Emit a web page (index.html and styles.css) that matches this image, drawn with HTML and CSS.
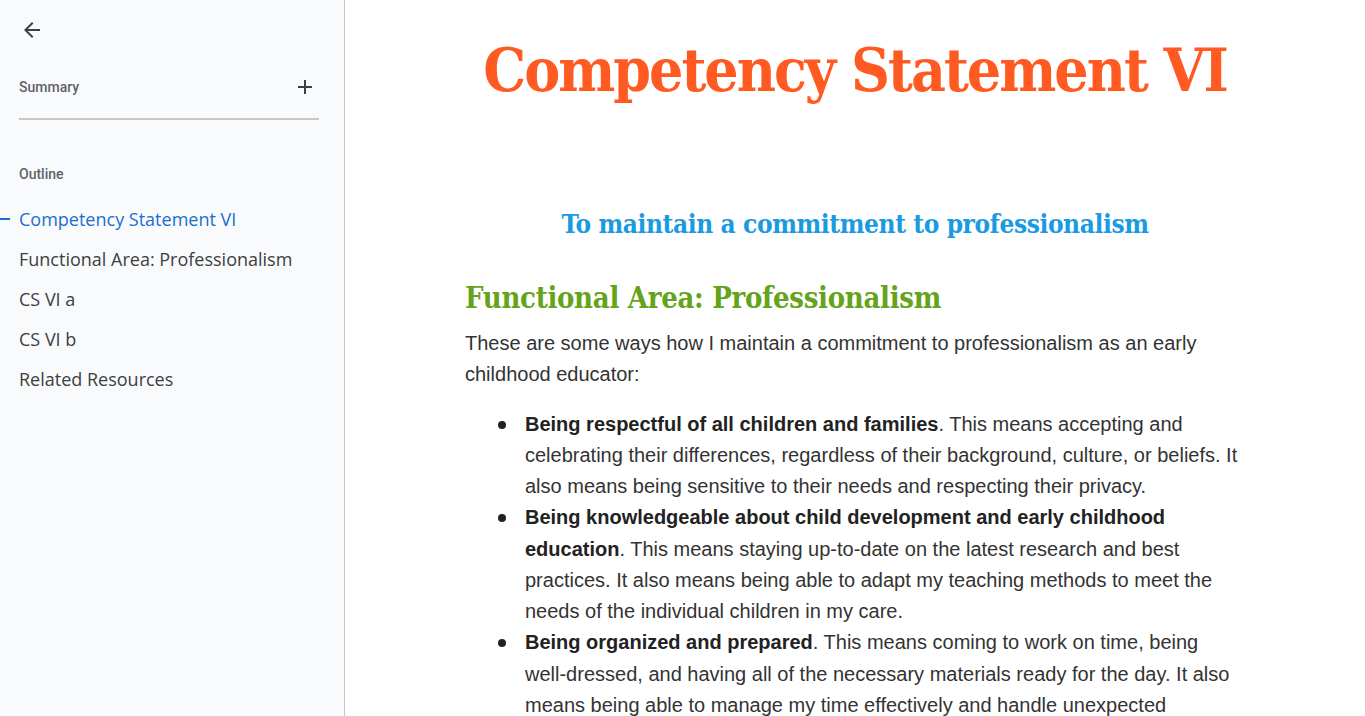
FILE: index.html
```html
<!DOCTYPE html>
<html lang="en">
<head>
<meta charset="utf-8">
<title>Competency Statement VI</title>
<link rel="stylesheet" href="styles.css">
</head>
<body>
<div class="page">
  <aside class="sidebar">
    <button class="back" aria-label="Back">
      <svg width="24" height="24" viewBox="0 0 24 24"><path d="M20 11H7.83l5.59-5.59L12 4l-8 8 8 8 1.41-1.41L7.83 13H20v-2z" fill="#3c4043"/></svg>
    </button>
    <div class="summary">
      <span class="label">Summary</span>
      <svg class="plus" width="24" height="24" viewBox="0 0 24 24"><path d="M19 13h-6v6h-2v-6H5v-2h6V5h2v6h6v2z" fill="#3c4043"/></svg>
    </div>
    <div class="divider"></div>
    <div class="outline-label label">Outline</div>
    <ul class="outline">
      <li class="active">Competency Statement VI</li>
      <li>Functional Area: Professionalism</li>
      <li>CS VI a</li>
      <li>CS VI b</li>
      <li>Related Resources</li>
    </ul>
  </aside>
  <main class="main">
    <h1 class="title">Competency Statement VI</h1>
    <div class="content">
      <h2 class="subtitle">To maintain a commitment to professionalism</h2>
      <h3 class="area">Functional Area: Professionalism</h3>
      <p class="text">These are some ways how I maintain a commitment to professionalism as an early childhood educator:</p>
      <ul class="list text">
        <li><b>Being respectful of all children and families</b>. This means accepting and celebrating their differences, regardless of their background, culture, or beliefs. It also means being sensitive to their needs and respecting their privacy.</li>
        <li><b>Being knowledgeable about child development and early childhood education</b>. This means staying up-to-date on the latest research and best practices. It also means being able to adapt my teaching methods to meet the needs of the individual children in my care.</li>
        <li><b>Being organized and prepared</b>. This means coming to work on time, being <span class="nw">well-dressed,</span> and having all of the necessary materials ready for the day. It also means being able to manage my time effectively and handle unexpected situations calmly and professionally.</li>
      </ul>
    </div>
  </main>
</div>
</body>
</html>
```

FILE: styles.css
```css
* { box-sizing: border-box; }
html, body { margin: 0; padding: 0; height: 100%; overflow: hidden; }
body { background: #fff; font-family: "Liberation Sans", Arial, sans-serif; }

.page { display: flex; height: 716px; overflow: hidden; }

.sidebar {
  width: 345px;
  flex: none;
  background: #f9fafc;
  border-right: 1px solid #c6c6c6;
  padding: 0 25px 0 19px;
  font-family: Roboto, "Open Sans", sans-serif;
}
.back {
  display: block;
  margin: 18px 0 0 1px;
  padding: 0;
  width: 24px; height: 24px;
  background: none; border: 0;
}
.back svg { display: block; }
.label { font-size: 14px; font-weight: 500; color: #5f6368; }
.summary {
  display: flex; align-items: center; justify-content: space-between;
  margin-top: 33px;
  height: 24px;
  padding-right: 2px;
}
.plus { display: block; }
.divider { height: 2px; background: #c7c7c7; margin-top: 19px; }
.outline-label { margin-top: 44px; line-height: 20px; }
.outline { list-style: none; margin: 15px 0 0 0; padding: 0; }
.outline li {
  font-family: "Open Sans", Roboto, sans-serif;
  font-size: 18px; line-height: 40px; height: 40px;
  color: #3c4043; position: relative; white-space: nowrap;
}
.outline li.active { color: #1a6fd0; }
.outline li.active::before {
  content: ""; position: absolute; left: -19px; top: 19px;
  width: 10px; height: 2px; background: #1a6fd0;
}

.main { flex: 1; min-width: 0; display: flex; flex-direction: column; align-items: center; }
.title {
  margin: 30px 0 0 0;
  font-family: "DejaVu Serif Condensed", "DejaVu Serif", serif;
  font-weight: bold;
  font-size: 60px;
  line-height: 80px;
  color: #ff5a22;
  text-align: center;
  letter-spacing: -2px;
}
.content { width: 780px; }
.subtitle {
  margin: 97px 0 0 0;
  font-family: "DejaVu Serif Condensed", "DejaVu Serif", serif;
  font-weight: bold;
  font-size: 26px; line-height: 34px;
  color: #1a9ae0;
  text-align: center;
  letter-spacing: -0.4px;
}
.area {
  margin: 39px 0 0 0;
  font-family: "DejaVu Serif Condensed", "DejaVu Serif", serif;
  font-weight: bold;
  font-size: 29px; line-height: 36px;
  color: #64a31a;
  letter-spacing: -0.3px;
}
.text { font-size: 20px; line-height: 31.25px; color: #333; }
p.text { margin: 12px 0 0 0; }
.list { margin: 18px 0 0 0; padding-left: 60px; list-style: none; }
.list li { position: relative; }
.list li::before {
  content: ""; position: absolute; left: -27px; top: 12px;
  width: 8px; height: 8px; border-radius: 50%; background: #222;
}
.list b { color: #222; }
.nw { white-space: nowrap; }
```
